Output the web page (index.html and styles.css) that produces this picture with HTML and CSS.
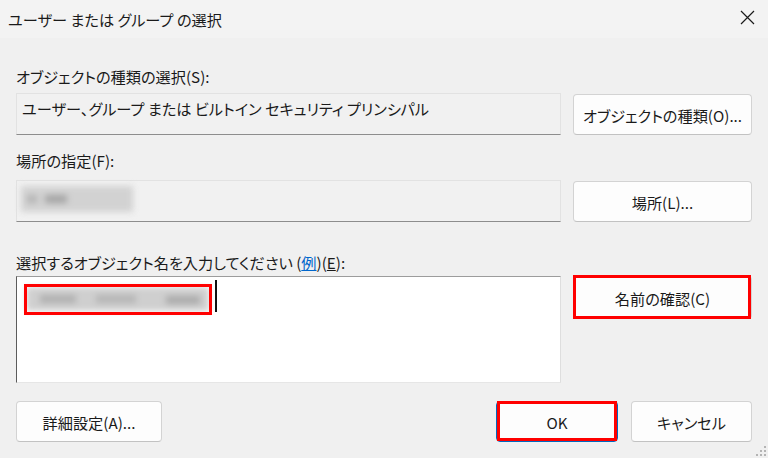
FILE: index.html
```html
<!DOCTYPE html>
<html lang="ja">
<head>
<meta charset="utf-8">
<title>ユーザー または グループ の選択</title>
<link rel="stylesheet" href="styles.css">
</head>
<body>
<div class="dialog">
  <div class="titlebar">
    <span class="title">ユーザー または グループ の選択</span>
    <svg class="close" width="15" height="15" viewBox="0 0 15 15"><path d="M1 1 L14 14 M14 1 L1 14" stroke="#1a1a1a" stroke-width="1.2" fill="none"/></svg>
  </div>
  <div class="content">
    <div class="label l1">オブジェクトの種類の選択(S):</div>
    <div class="row r1">
      <div class="field text-field">ユーザー、グループ または ビルトイン セキュリティ プリンシパル</div>
      <button class="btn">オブジェクトの種類(O)...</button>
    </div>
    <div class="label l2">場所の指定(F):</div>
    <div class="row r2">
      <div class="field"><div class="blur loc"><span class="dot d1"></span><span class="dot d2"></span></div></div>
      <button class="btn">場所(L)...</button>
    </div>
    <div class="label l3">選択するオブジェクト名を入力してください (<span class="link">例</span>)(<u>E</u>):</div>
    <div class="row r3">
      <div class="textarea">
        <div class="entry">
          <div class="blur name"><span class="dot n1"></span><span class="dot n2"></span><span class="dot n3"></span></div>
          <span class="caret"></span>
          <span class="mark mark-entry"></span>
        </div>
      </div>
      <div class="btn-wrap">
        <button class="btn check">名前の確認(C)</button>
        <span class="mark mark-check"></span>
      </div>
    </div>
    <div class="footer">
      <button class="btn adv">詳細設定(A)...</button>
      <div class="spacer"></div>
      <div class="btn-wrap ok-wrap">
        <button class="btn ok">OK</button>
        <span class="mark mark-ok"></span>
      </div>
      <button class="btn cancel">キャンセル</button>
    </div>
  </div>
  <svg class="grip" width="12" height="12" viewBox="0 0 12 12">
    <rect x="8" y="0" width="2" height="2" fill="#b4b4b4"/>
    <rect x="4" y="4" width="2" height="2" fill="#b4b4b4"/>
    <rect x="8" y="4" width="2" height="2" fill="#b4b4b4"/>
    <rect x="0" y="8" width="2" height="2" fill="#b4b4b4"/>
    <rect x="4" y="8" width="2" height="2" fill="#b4b4b4"/>
    <rect x="8" y="8" width="2" height="2" fill="#b4b4b4"/>
  </svg>
</div>
</body>
</html>
```

FILE: styles.css
```css
html, body {
  margin: 0;
  padding: 0;
}
body {
  width: 768px;
  height: 458px;
  overflow: hidden;
  background: #f0f0f0;
  font-family: "Noto Sans CJK JP", "Noto Sans", sans-serif;
  font-size: 15.2px;
  color: #1a1a1a;
  font-feature-settings: "palt";
}
.dialog {
  position: relative;
  width: 768px;
  height: 458px;
}
.titlebar {
  height: 38px;
  background: #f3f3f3;
  display: flex;
  align-items: center;
  justify-content: space-between;
  padding: 0 13px 0 8px;
  box-sizing: border-box;
}
.title {
  line-height: 20px;
  margin-top: -1px;
}
.close {
  display: block;
  margin-top: -3px;
}
.content {
  padding: 0 16px;
  display: flex;
  flex-direction: column;
}
.label {
  line-height: 20px;
  height: 20px;
}
.l1 { margin-top: 28px; }
.l2 { margin-top: 15px; }
.l3 { margin-top: 30px; }
.row {
  display: grid;
  grid-template-columns: 545px 179px;
  column-gap: 12px;
}
.r1 { margin-top: 7px; align-items: end; }
.r2 { margin-top: 10px; align-items: end; }
.r3 { margin-top: 4px; align-items: start; }
.field {
  height: 42px;
  box-sizing: border-box;
  background: #f1f1f1;
  border: 1px solid #e2e2e2;
  border-bottom: 1px solid #8d8d8d;
  padding: 3px 5px;
  line-height: 26px;
  white-space: nowrap;
}
.text-field {
  padding-top: 1px;
}
.btn {
  font-family: inherit;
  font-size: 15.2px;
  font-feature-settings: "palt";
  color: #1a1a1a;
  background: #fdfdfd;
  border: 1px solid #d3d3d3;
  border-bottom-color: #c2c2c2;
  border-radius: 4px;
  height: 41px;
  padding: 0;
  margin: 0;
  box-sizing: border-box;
  display: block;
  width: 100%;
}
.blur {
  position: relative;
  filter: blur(3px);
}
.loc {
  width: 112px;
  height: 26px;
  margin-top: 2px;
  margin-left: -1px;
  background: #d2d2d2;
}
.dot {
  position: absolute;
  background: #a9a9a9;
  height: 8px;
  top: 9px;
}
.d1 { left: 6px; width: 10px; background: #b4b4b4; }
.d2 { left: 24px; width: 22px; background: #a4a4a4; }
.textarea {
  height: 107px;
  box-sizing: border-box;
  background: #ffffff;
  border-top: 1px solid #9c9c9c;
  border-left: 1px solid #5c5c5c;
  border-right: 1px solid #dedede;
  border-bottom: 1px solid #e6e6e6;
  padding: 10px 0 0 9px;
}
.entry {
  position: relative;
  display: flex;
  align-items: flex-start;
}
.name {
  width: 183px;
  height: 24px;
  background: #cfcfcf;
}
.n1 { left: 14px; width: 36px; top: 8px; background: #b0b0b0; }
.n2 { left: 70px; width: 40px; top: 8px; background: #b5b5b5; }
.n3 { left: 140px; width: 34px; top: 9px; background: #aaaaaa; }
.caret {
  width: 1.5px;
  height: 32px;
  background: #111;
  margin-left: 6px;
  margin-top: -7px;
}
.btn-wrap {
  position: relative;
}
.check {
  height: 43px;
}
.mark {
  position: absolute;
  border: 3px solid #ff0000;
  box-sizing: border-box;
  pointer-events: none;
}
.mark-entry {
  left: -2px;
  top: -3px;
  width: 188px;
  height: 31px;
}
.mark-check {
  left: 0;
  top: -1px;
  width: 178px;
  height: 44px;
}
.footer {
  margin-top: 18px;
  display: flex;
  align-items: flex-start;
}
.adv { width: 146px; }
.spacer { flex: 1; }
.ok-wrap { width: 122px; }
.ok {
  border: 1px solid #0067c0;
}
.mark-ok {
  left: 1px;
  top: 0;
  width: 120px;
  height: 40px;
}
.cancel {
  width: 121px;
  margin-left: 13px;
}
.grip {
  position: absolute;
  right: 0;
  bottom: 0;
}
u { text-decoration: underline; }
.link {
  color: #0066cc;
  text-decoration: underline;
}
```
